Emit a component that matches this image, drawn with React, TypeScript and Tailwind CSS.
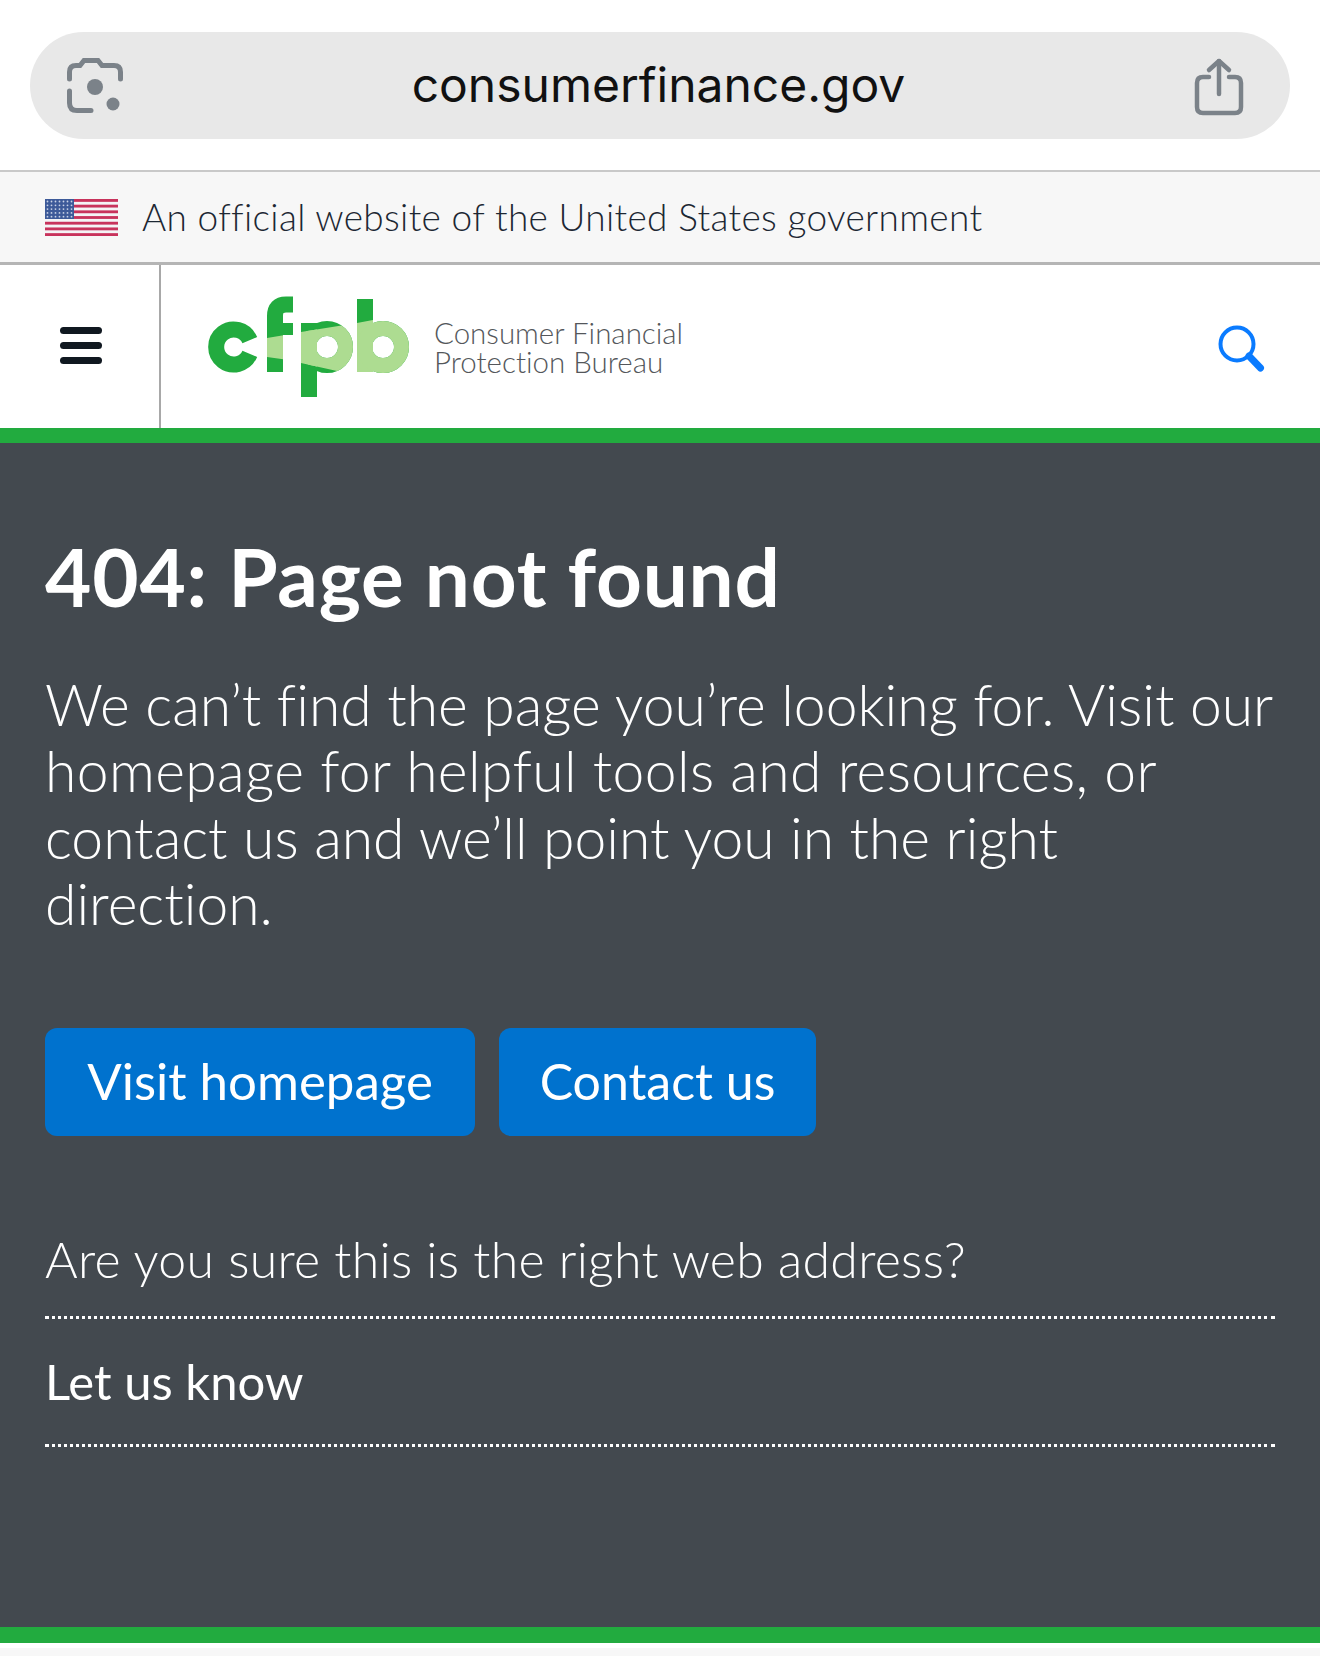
const avenir = "font-['Lato','Open_Sans',sans-serif] [font-variant-ligatures:none]";

function LensIcon() {
  return (
    <svg width="56" height="56" viewBox="0 0 56 56" fill="none" stroke="#7b8289" strokeWidth="5" strokeLinecap="round">
      <path d="M2.5 21 V14 Q2.5 7.5 9 7.5 H13 L17 2.5 H31 L35 7.5 H47 Q53.5 7.5 53.5 14 V21" />
      <path d="M2.5 33 V45 Q2.5 52.5 10 52.5 H24" />
      <circle cx="28" cy="29" r="8" fill="#7b8289" stroke="none" />
      <circle cx="46" cy="46" r="6.5" fill="#7b8289" stroke="none" />
    </svg>
  );
}

function ShareIcon() {
  return (
    <svg width="50" height="60" viewBox="0 0 50 60" fill="none" stroke="#7b8289" strokeWidth="4.5" strokeLinecap="round" strokeLinejoin="round">
      <path d="M15 21 H9 Q3 21 3 27 V51 Q3 57 9 57 H41 Q47 57 47 51 V27 Q47 21 41 21 H35" />
      <path d="M25 38 V5" />
      <path d="M15 14 L25 5 L35 14" />
    </svg>
  );
}

function Flag() {
  const stripes = Array.from({ length: 7 }, (_, i) => i * 2);
  return (
    <svg width="73" height="37" viewBox="0 0 73 37">
      <rect width="73" height="37" fill="#f4f4f6" />
      {stripes.map((s) => (
        <rect key={s} y={s * (37 / 13)} width="73" height={37 / 13} fill="#c8335c" />
      ))}
      <rect width="29" height="20" fill="#3d5a99" />
      {Array.from({ length: 5 }, (_, r) =>
        Array.from({ length: 7 }, (_, c) => (
          <circle key={`${r}-${c}`} cx={2.5 + c * 4} cy={2.5 + r * 3.8} r="0.9" fill="#c9d2e6" />
        )),
      )}
    </svg>
  );
}

function Letters() {
  return (
    <g fill="none" stroke="currentColor">
      <path d="M249.8 340.2 A17.5 17.5 0 1 0 249.8 353.8" strokeWidth="16" />
      <path d="M275 372 V316 Q275 304.5 286 304.5 H293" strokeWidth="16" />
      <path d="M267 329 H293" strokeWidth="12" />
      <path d="M309 397 V323" strokeWidth="16" />
      <circle cx="327" cy="347" r="18.5" strokeWidth="15" />
      <path d="M365 372 V299" strokeWidth="16" />
      <circle cx="383" cy="347" r="18.5" strokeWidth="15" />
    </g>
  );
}

function Logo() {
  return (
    <svg width="240" height="130" viewBox="190 280 240 130" className="shrink-0">
      <defs>
        <clipPath id="cfpb-light">
          <polygon points="267,338 285,335 285,359.5 267,357" />
          <polygon points="301,332 357,323 410,313 410,377 346,373 301,363" />
        </clipPath>
      </defs>
      <g className="text-[#22ab3f]">
        <Letters />
      </g>
      <g className="text-[#addc91]" clipPath="url(#cfpb-light)">
        <Letters />
      </g>
    </svg>
  );
}

function SearchIcon() {
  return (
    <svg width="50" height="50" viewBox="0 0 50 50" fill="none" stroke="#0a7bff">
      <circle cx="20" cy="20" r="16.5" strokeWidth="4" />
      <path d="M32 32 L43.5 44" strokeWidth="7" strokeLinecap="round" />
    </svg>
  );
}

export default function App() {
  return (
    <div className={`w-[1320px] h-[1656px] bg-white overflow-hidden flex flex-col ${avenir}`}>
      {/* Browser bar */}
      <div className="h-[170px] shrink-0 pt-8 px-[30px]">
        <div className="h-[107px] rounded-[54px] bg-[#e8e8e8] flex items-center justify-between pl-[37px] pr-[46px]">
          <LensIcon />
          <span className="font-['Inter',sans-serif] text-[48px] -translate-y-px text-[#111]">consumerfinance.gov</span>
          <ShareIcon />
        </div>
      </div>

      {/* Gov banner */}
      <div className="h-[95px] shrink-0 bg-[#f7f7f7] border-t-2 border-t-[#c9c9c9] border-b-[3px] border-b-[#b5b5b5] flex items-center pl-[45px] gap-6">
        <Flag />
        <span className="text-[37px] tracking-[0.33px] font-light text-[#1d2733]">An official website of the United States government</span>
      </div>

      {/* Header */}
      <div className="h-[163px] shrink-0 flex items-stretch">
        <div className="w-[161px] shrink-0 border-r-2 border-r-[#a8a8a8] pl-[60px] pt-[62px]">
          <div className="w-[42px] flex flex-col gap-2">
            <div className="h-[7px] rounded-full bg-[#101820]" />
            <div className="h-[7px] rounded-full bg-[#101820]" />
            <div className="h-[7px] rounded-full bg-[#101820]" />
          </div>
        </div>
        <div className="flex-1 flex items-start pl-[29px] pt-[15px]">
          <Logo />
          <div className="ml-[4px] mt-[38px] text-[29.5px] leading-[29px] font-light text-[#54575b]">
            Consumer Financial
            <br />
            Protection Bureau
          </div>
          <div className="ml-auto mr-[53px] mt-[44px]">
            <SearchIcon />
          </div>
        </div>
      </div>

      <div className="h-[15px] shrink-0 bg-[#22ab3f]" />

      {/* 404 content */}
      <div className="h-[1184px] shrink-0 bg-[#43494f] px-[45px] pt-[88px] text-white">
        <h1 className="text-[80px] tracking-[0.8px] leading-[90px] font-bold">404: Page not found</h1>
        <p className="mt-[50px] text-[57px] leading-[66.4px] font-light">
          We can’t find the page you’re looking for. Visit our
          <br />
          <span className="tracking-[0.38px]">homepage for helpful tools and resources, or</span>
          <br />
          contact us and we’ll point you in the right
          <br />
          direction.
        </p>
        <div className="mt-[91px] flex gap-6">
          <a className="h-[108px] w-[430px] rounded-xl bg-[#0072ce] flex items-center justify-center text-[51px]">Visit homepage</a>
          <a className="h-[108px] w-[317px] rounded-xl bg-[#0072ce] flex items-center justify-center text-[50px]">Contact us</a>
        </div>
        <div className="mt-[88px] w-[1230px] h-[95px] border-b-[3px] border-dotted border-b-white text-[50px] tracking-[0.3px] leading-[70px] font-light">
          Are you sure this is the right web address?
        </div>
        <div className="mt-[27px] w-[1230px] h-[101px] border-b-[3px] border-dotted border-b-white text-[49px] leading-[70px]">
          Let us know
        </div>
      </div>

      <div className="h-[16px] shrink-0 bg-[#22ab3f]" />
      <div className="flex-1 bg-[#f7f7f7] border-t-[5px] border-t-white" />
    </div>
  );
}
